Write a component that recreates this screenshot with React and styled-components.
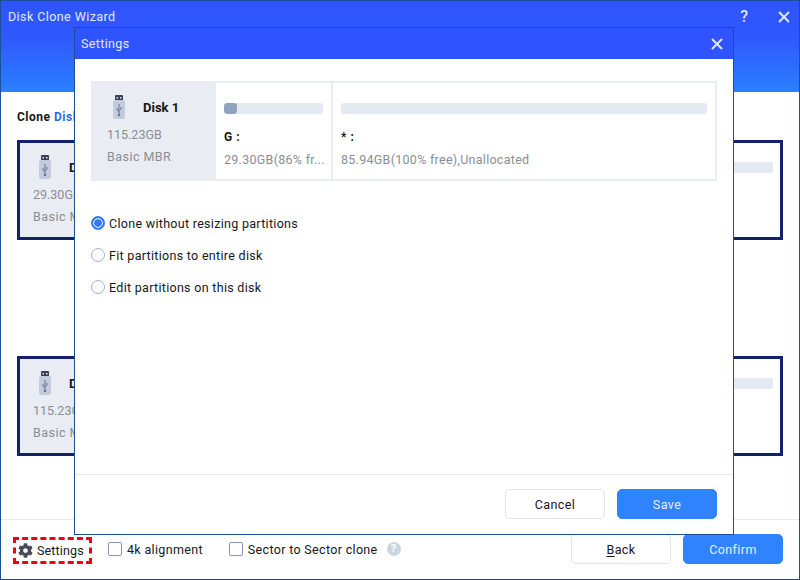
import React from 'react'
import styled, { createGlobalStyle } from 'styled-components'
import { FaCog } from 'react-icons/fa'

const Global = createGlobalStyle`
  html, body { margin: 0; padding: 0; background: #fff; }
  body { font-family: Roboto, "Noto Sans", sans-serif; font-size: 12.5px; color: #15171c; }
  * { box-sizing: border-box; }
`

const Win = styled.div`
  position: relative;
  width: 800px;
  height: 580px;
  border: 1px solid #1a4f9c;
  background: #fff;
  display: flex;
  flex-direction: column;
  overflow: hidden;
`

const TopBar = styled.div`
  height: 91px;
  flex: none;
  padding: 0 7px;
  background: linear-gradient(180deg, #2f54ff 0%, #2f58ff 40%, #2a80ff 100%);
  display: flex;
  align-items: flex-start;
  justify-content: space-between;
  color: #e3e9ff;
`

const BarTitle = styled.div`
  font-size: 12.5px;
  letter-spacing: 0.42px;
  line-height: 31px;
`

const BarBtns = styled.div`
  display: flex;
  align-items: center;
  gap: 30px;
  height: 31px;
  padding-right: 2px;
`

const HelpMark = styled.span`
  font-size: 16px;
  font-weight: 500;
  line-height: 1;
  color: #dfe6ff;
`

const Main = styled.div`
  flex: 1;
  padding: 15px 16px 0;
  display: flex;
  flex-direction: column;
`

const CloneTitle = styled.div`
  font-weight: 700;
  font-size: 12px;
  line-height: 20px;
  letter-spacing: 0.5px;
  margin-bottom: 13px;
  span { color: #2a6cf0; }
`

const Cards = styled.div`
  display: flex;
  flex-direction: column;
  gap: 116px;
`

const Card = styled.div`
  height: 100px;
  border: 3px solid #10226a;
  display: flex;
`

const CardLeft = styled.div`
  width: 200px;
  background: #e9ecf3;
  padding: 11px 13px;
`

const CardRight = styled.div`
  flex: 1;
  padding: 19px 7px 0 0;
  display: flex;
  justify-content: flex-end;
`

const CardBar = styled.div`
  width: 300px;
  height: 11px;
  border-radius: 2px;
  background: #e4e9f2;
`

const NameRow = styled.div`
  display: flex;
  align-items: center;
  gap: 18px;
  padding-left: 6px;
  height: 26px;
  margin-bottom: 4px;
  font-weight: 700;
  font-size: 13px;
`

const GrayLine = styled.div`
  color: #8b8d94;
  letter-spacing: ${p => (p.$tight ? '0' : '0.45px')};
  font-size: 12.5px;
  line-height: 22px;
  white-space: nowrap;
`

const Footer = styled.div`
  height: 60px;
  flex: none;
  border-top: 1px solid #e6e9f0;
  padding: 14px 16px 0 12px;
  display: flex;
  align-items: flex-start;
`

const SettingsBox = styled.div`
  width: 79px;
  height: 27px;
  margin-top: 3px;
  border: 3px dashed #f00010;
  display: flex;
  align-items: center;
  gap: 4px;
  padding-left: 2px;
  letter-spacing: 0.15px;
  margin-right: 16px;
  color: #15171c;
  svg { color: #484c58; flex: none; }
`

const CheckItem = styled.label`
  display: flex;
  align-items: center;
  gap: 5px;
  height: 30px;
  margin-right: ${p => p.$gap}px;
  letter-spacing: 0.33px;
  white-space: nowrap;
`

const Box = styled.span`
  width: 14px;
  height: 14px;
  border: 1px solid #8a97b5;
  border-radius: 2px;
  background: #fff;
`

const HelpDot = styled.span`
  width: 14px;
  height: 14px;
  border-radius: 50%;
  background: #cdd5e3;
  color: #fff;
  font-size: 11px;
  font-weight: 700;
  line-height: 14px;
  text-align: center;
  margin: 8px 0 0 -17px;
`

const Spacer = styled.div`
  flex: 1;
`

const Btn = styled.button`
  width: 100px;
  height: 30px;
  border-radius: 5px;
  font: inherit;
  letter-spacing: 0.4px;
  padding: 0;
  border: 1px solid ${p => (p.$primary ? '#3083ff' : '#e1e4ee')};
  background: ${p => (p.$primary ? '#3083ff' : '#fff')};
  color: ${p => (p.$primary ? '#e6eeff' : '#15171c')};
  margin-left: 12px;
  u { text-underline-offset: 2px; }
`

const Modal = styled.div`
  position: absolute;
  left: 73px;
  top: 26px;
  width: 660px;
  height: 508px;
  border: 1px solid #1a4f9c;
  background: #fff;
  display: flex;
  flex-direction: column;
`

const ModalHead = styled.div`
  height: 31px;
  flex: none;
  background: #2f54ff;
  color: #e3e9ff;
  display: flex;
  align-items: center;
  justify-content: space-between;
  padding: 0 10px 0 6px;
  letter-spacing: 0.35px;
`

const ModalBody = styled.div`
  flex: 1;
  padding: 22px 16px 0;
`

const DiskPanel = styled.div`
  height: 100px;
  border: 2px solid #e9ecf3;
  display: flex;
  margin-bottom: 32px;
`

const DiskSide = styled.div`
  width: 123px;
  flex: none;
  background: #e9ecf3;
  padding: 11px 14px;
`

const Part = styled.div`
  width: ${p => (p.$grow ? 'auto' : '117px')};
  flex: ${p => (p.$grow ? 1 : 'none')};
  min-width: 0;
  padding: 20px 8px 0;
  border-right: ${p => (p.$grow ? 'none' : '2px solid #e9ecf3')};
`

const Track = styled.div`
  height: 11px;
  border-radius: 3px;
  background: #e4e9f2;
  margin-bottom: 12px;
  overflow: hidden;
`

const Fill = styled.div`
  height: 100%;
  border-radius: 3px;
  background: #8fa3c0;
`

const PartName = styled.div`
  font-weight: 700;
  font-size: 12px;
  line-height: 22px;
  letter-spacing: 0.5px;
`

const PartInfo = styled(GrayLine)`
  line-height: 24px;
  letter-spacing: 0.28px;
`

const Options = styled.div`
  display: flex;
  flex-direction: column;
  gap: 12px;
`

const Option = styled.label`
  display: flex;
  align-items: center;
  gap: 4px;
  height: 20px;
  letter-spacing: 0.3px;
`

const Radio = styled.span`
  width: 14px;
  height: 14px;
  border-radius: 50%;
  flex: none;
  background: ${p => (p.$on
    ? 'radial-gradient(circle, #2f7bf5 0 3.5px, #e4eeff 4px 4.5px, #2f7bf5 5px)'
    : '#fff')};
  border: 1px solid ${p => (p.$on ? '#2f7bf5' : '#a3aec6')};
`

const ModalFoot = styled.div`
  height: 60px;
  flex: none;
  border-top: 1px solid #e6e9f0;
  padding: 14px 16px 0;
  display: flex;
  justify-content: flex-end;
`

function CloseIcon() {
  return (
    <svg width="12" height="12" viewBox="0 0 12 12">
      <path d="M1 1L11 11M11 1L1 11" stroke="#dfe6ff" strokeWidth="2" fill="none" />
    </svg>
  )
}

function UsbIcon() {
  return (
    <svg width="12" height="24" viewBox="0 0 12 24">
      <rect x="2" y="0" width="8" height="6" rx="1" fill="#3b4152" />
      <rect x="3.5" y="2" width="1.5" height="1.5" fill="#e9ecf3" />
      <rect x="7" y="2" width="1.5" height="1.5" fill="#e9ecf3" />
      <rect x="0" y="5" width="12" height="19" rx="2" fill="#c3cbdc" />
      <path d="M6 9V20M4 13V15L6 17M8 12V14L6 16" stroke="#67769a" strokeWidth="1" fill="none" />
      <circle cx="6" cy="20" r="1.3" fill="#67769a" />
    </svg>
  )
}

function DiskCard({ name, size }) {
  return (
    <Card>
      <CardLeft>
        <NameRow>
          <UsbIcon />
          {name}
        </NameRow>
        <GrayLine $tight>{size}</GrayLine>
        <GrayLine>Basic MBR</GrayLine>
      </CardLeft>
      <CardRight>
        <CardBar />
      </CardRight>
    </Card>
  )
}

const options = ['Clone without resizing partitions', 'Fit partitions to entire disk', 'Edit partitions on this disk']

export default function App() {
  return (
    <Win>
      <Global />
      <TopBar>
        <BarTitle>Disk Clone Wizard</BarTitle>
        <BarBtns>
          <HelpMark>?</HelpMark>
          <CloseIcon />
        </BarBtns>
      </TopBar>
      <Main>
        <CloneTitle>Clone <span>Disk</span></CloneTitle>
        <Cards>
          <DiskCard name="Disk 1" size="29.30GB" />
          <DiskCard name="Disk 2" size="115.23GB" />
        </Cards>
      </Main>
      <Footer>
        <SettingsBox>
          <FaCog size={15} />
          Settings
        </SettingsBox>
        <CheckItem $gap={26}><Box />4k alignment</CheckItem>
        <CheckItem $gap={26}><Box />Sector to Sector clone</CheckItem>
        <HelpDot>?</HelpDot>
        <Spacer />
        <Btn><u>B</u>ack</Btn>
        <Btn $primary>Confirm</Btn>
      </Footer>
      <Modal>
        <ModalHead>
          Settings
          <CloseIcon />
        </ModalHead>
        <ModalBody>
          <DiskPanel>
            <DiskSide>
              <NameRow>
                <UsbIcon />
                Disk 1
              </NameRow>
              <GrayLine $tight>115.23GB</GrayLine>
              <GrayLine>Basic MBR</GrayLine>
            </DiskSide>
            <Part>
              <Track><Fill style={{ width: '13%' }} /></Track>
              <PartName>G :</PartName>
              <PartInfo>29.30GB(86% fr...</PartInfo>
            </Part>
            <Part $grow>
              <Track />
              <PartName>* :</PartName>
              <PartInfo>85.94GB(100% free),Unallocated</PartInfo>
            </Part>
          </DiskPanel>
          <Options>
            {options.map((label, i) => (
              <Option key={label}>
                <Radio $on={i === 0} />
                {label}
              </Option>
            ))}
          </Options>
        </ModalBody>
        <ModalFoot>
          <Btn>Cancel</Btn>
          <Btn $primary>Save</Btn>
        </ModalFoot>
      </Modal>
    </Win>
  )
}
